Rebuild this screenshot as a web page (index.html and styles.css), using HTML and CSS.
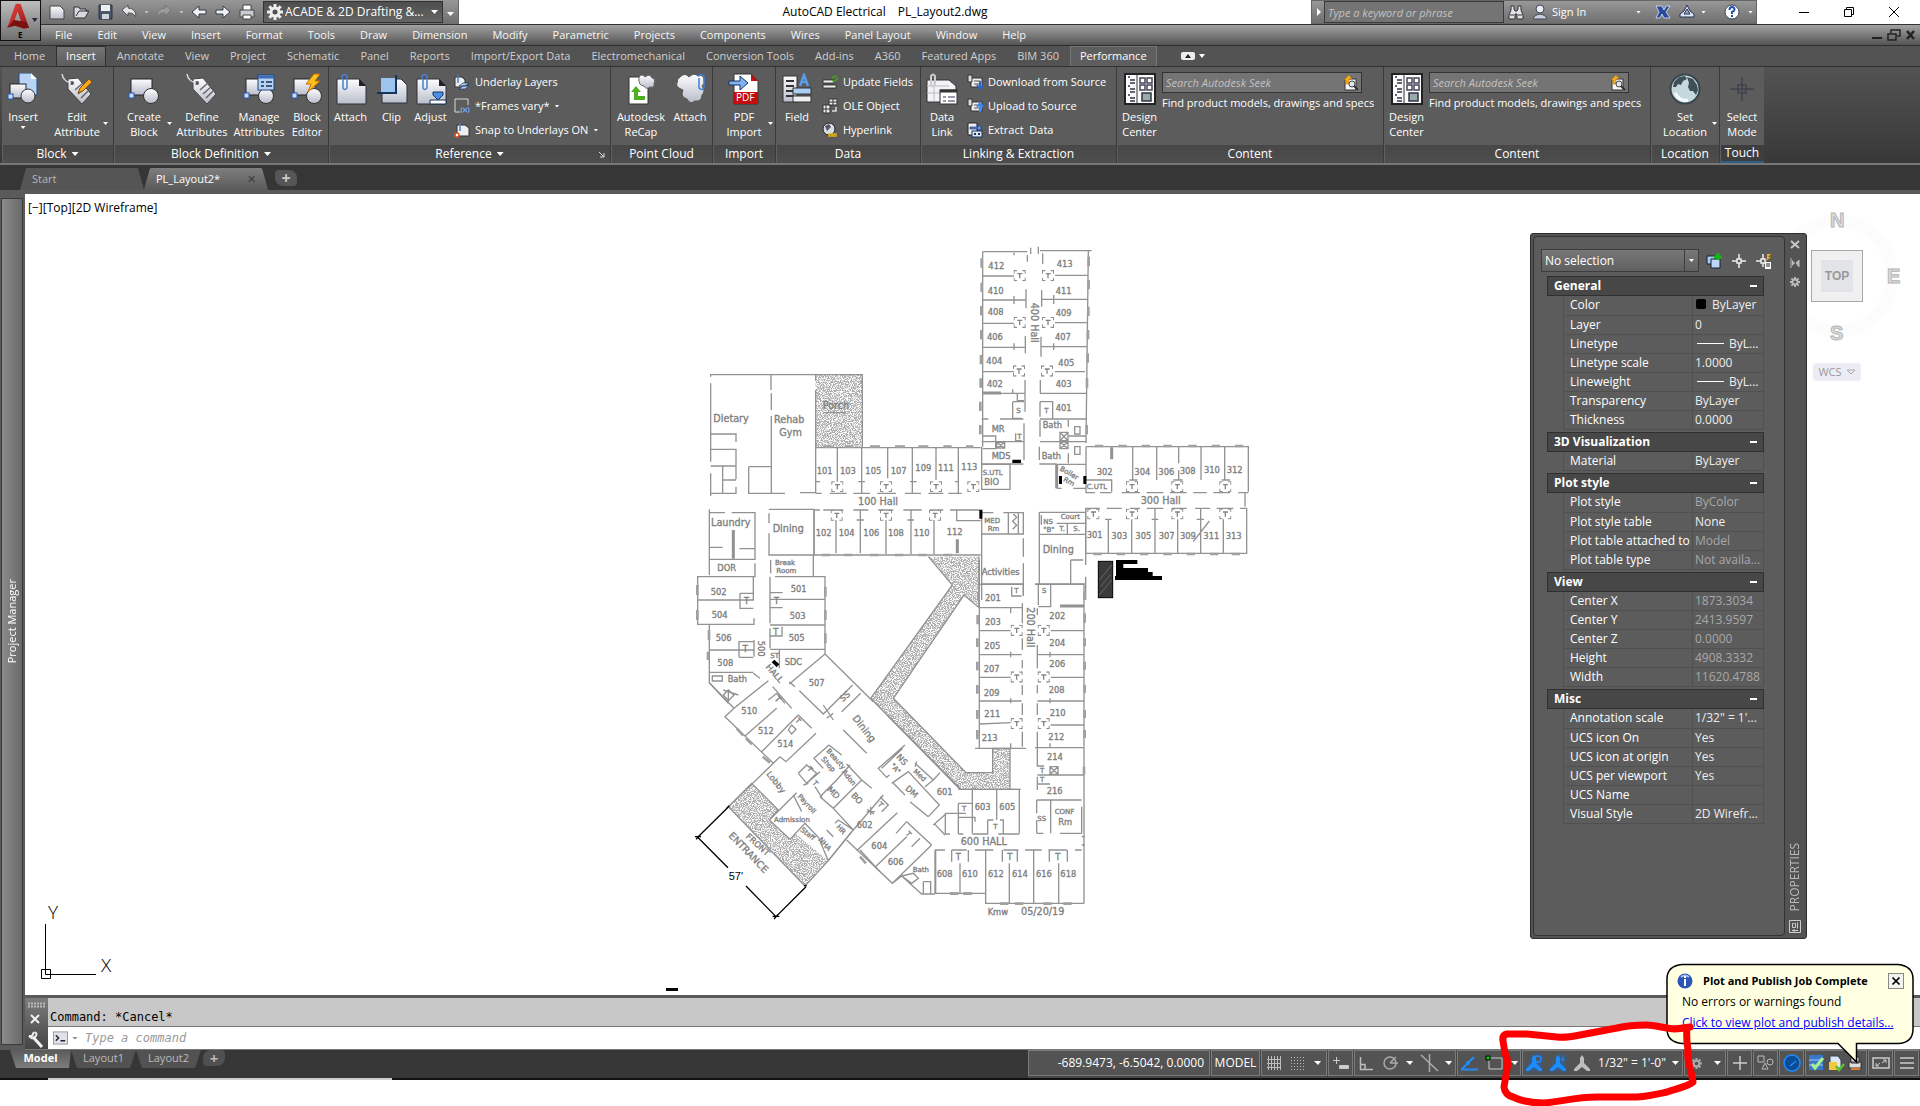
FILE: index.html
```html
<!DOCTYPE html>
<html lang="en">
<head>
<meta charset="utf-8">
<title>AutoCAD Electrical - PL_Layout2.dwg</title>
<link rel="stylesheet" href="styles.css">
</head>
<body>
<svg class="defs" aria-hidden="true">
  <defs>
    <linearGradient id="metal" x1="0" y1="0" x2="0" y2="1"><stop offset="0" stop-color="#fdfdfe"/><stop offset="1" stop-color="#b9bdcb"/></linearGradient>
    <linearGradient id="red" x1="0" y1="0" x2="1" y2="1"><stop offset="0" stop-color="#e8473f"/><stop offset="1" stop-color="#8e1414"/></linearGradient>
    <filter id="speckle" x="0" y="0" width="1" height="1">
      <feTurbulence type="fractalNoise" baseFrequency="0.3" numOctaves="2" seed="7"/>
      <feColorMatrix values="0 0 0 0 .42  0 0 0 0 .42  0 0 0 0 .42  6 0 0 0 -2.4"/>
      <feComposite in2="SourceGraphic" operator="in"/>
    </filter>
    <symbol id="block" viewBox="0 0 32 32"><rect x="3" y="6" width="21" height="16" fill="url(#metal)" stroke="#22252c"/><rect x="1" y="20" width="5" height="5" fill="#c9dcff" stroke="#2456b0"/><circle cx="23" cy="23" r="7.500" fill="url(#metal)" stroke="#333"/></symbol>
    <symbol id="insert" viewBox="0 0 32 32"><path d="M12 0h12l6 6v16H12z" fill="#b7d4f5" stroke="#274a80"/><path d="M24 0v6h6z" fill="#fff"/><rect x="3" y="11" width="16" height="14" fill="url(#metal)" stroke="#22252c"/><rect x="1" y="21" width="5" height="5" fill="#c9dcff" stroke="#2456b0"/><circle cx="21" cy="23" r="7" fill="url(#metal)" stroke="#333"/></symbol>
    <symbol id="tag" viewBox="0 0 32 32"><path d="M7 6l10-1 13 16-9 10L7 16z" fill="url(#metal)" stroke="#444"/><circle cx="11" cy="10" r="2" fill="#555"/><path d="M1 1c1 6 4 8 9 9" fill="none" stroke="#ddd" stroke-width="1.500"/><path d="M14 17l8-7M17 21l8-7M20 25l7-7" stroke="#666" stroke-width="1.500"/></symbol>
    <symbol id="tagedit" viewBox="0 0 32 32"><use href="#tag"/><path d="M17 20l2-5 9-9 3 3-9 9z" fill="#f4a91c" stroke="#8a4a08"/></symbol>
    <symbol id="manage" viewBox="0 0 32 32"><use href="#block"/><rect x="15" y="2" width="16" height="15" fill="#b9d2f2" stroke="#1d437d"/><path d="M15 4h16" stroke="#3b6cb8" stroke-width="3"/><path d="M18 9h3M18 13h3M23 9h6M23 13h6" stroke="#16325e" stroke-width="1.500"/></symbol>
    <symbol id="bolt" viewBox="0 0 32 32"><use href="#block"/><path d="M23 1L15 11h5l-3 8 12-11h-5l5-7z" fill="#ffc21a" stroke="#c76a00"/></symbol>
    <symbol id="sheet" viewBox="0 0 32 32"><path d="M2 6h22l7 7v18H2z" fill="url(#metal)" stroke="#2d3038"/><path d="M24 6v7h7z" fill="#222"/><path d="M7 6V3q2.500-3 5 0v12q-2.500 3-4 0V6" fill="none" stroke="#4a7fd0" stroke-width="1.500"/></symbol>
    <symbol id="clip" viewBox="0 0 32 32"><path d="M6 6h19l6 6v18H6z" fill="url(#metal)" stroke="#2d3038"/><path d="M5 5h14v14H5z" fill="#9cc4ee"/><path d="M1 20h19V2" fill="none" stroke="#16325e" stroke-width="2"/></symbol>
    <symbol id="adjust" viewBox="0 0 32 32"><use href="#sheet"/><path d="M15 27h16v4H15z" fill="#fff" stroke="#16325e"/><path d="M18 19h10v3l-5 5-5-5z" fill="#4a90e8" stroke="#16325e"/></symbol>
    <symbol id="cloud" viewBox="0 0 32 32"><path d="M6 4q5-5 9 0 5-5 9-1 5-2 6 3 2 4-2 7 4 5 0 9 0 7-7 6-5 4-8-2-7-2-4-9-8-3-6-7 0-4 3-6z" fill="url(#metal)" stroke="#555"/></symbol>
    <symbol id="cloudclip" viewBox="0 0 32 32"><use href="#cloud"/><path d="M24 3q3-3 6 0v12q-2 3-5 0V5" fill="none" stroke="#3f7fd8" stroke-width="1.500"/></symbol>
    <symbol id="recap" viewBox="0 0 32 32"><path d="M4 4h19v27H4z" fill="#fff" stroke="#333"/><path d="M14 4q3-4 6 0 5-4 7 1 4 1 2 5 1 5-4 4-4 3-6-1-6 0-5-9z" fill="url(#metal)" stroke="#666"/><path d="M11 13l5 6h-3v4h7v4H9v-8H6z" fill="#4fae22"/></symbol>
    <symbol id="pdf" viewBox="0 0 32 32"><path d="M6 1h17l7 7v23H6z" fill="#fff" stroke="#333"/><path d="M23 1v7h7z" fill="#c01010"/><path d="M6 19h24v12H6z" fill="#c40d0d"/><path d="M1 8h11V3l8 7-8 7v-5H1z" fill="#7fb2f0" stroke="#16325e"/></symbol>
    <symbol id="field" viewBox="0 0 32 32"><rect x="2" y="3" width="14" height="26" fill="url(#metal)" stroke="#333"/><path d="M5 8h8M5 13h8M5 18h8M5 23h8" stroke="#333" stroke-width="2"/><path d="M19 13l4-11 4 11M20 9h6" fill="none" stroke="#5a9be8" stroke-width="2.500"/><rect x="12" y="15" width="18" height="6" fill="#a9cdf5" stroke="#333"/><rect x="12" y="23" width="18" height="6" fill="#eee" stroke="#333"/></symbol>
    <symbol id="datalink" viewBox="0 0 32 32"><path d="M1 7h22l7 6v16H1z" fill="#f2f3f6" stroke="#333"/><path d="M1 13h22M1 20h14M8 8v20" stroke="#bbb"/><rect x="14" y="17" width="17" height="14" fill="#fff" stroke="#333"/><path d="M14 18h17" stroke="#333" stroke-width="3"/><path d="M17 24h3M22 24h7M17 28h3M22 28h7" stroke="#335"/><path d="M5 3q2-3 4 0v9q-2 3-4 0z" fill="none" stroke="#ccc" stroke-width="2"/></symbol>
    <symbol id="design" viewBox="0 0 32 32"><rect x="1" y="1" width="30" height="30" fill="#fbfbfd" stroke="#222" stroke-width="2"/><path d="M13 1v30" stroke="#333"/><path d="M4 4h2M6 7h5M6 10h5M4 13h2M6 16h5M6 19h5M4 22h2M6 25h5M6 28h5" stroke="#334" stroke-width="1.500"/><path d="M16 5h5v5h-5zM23 5h5v5h-5zM16 12h5v5h-5zM23 12h5v5h-5z" fill="#fff" stroke="#445" stroke-width="1.500"/><rect x="18" y="20" width="9" height="8" fill="#9aa" stroke="#334" stroke-width="1.500"/></symbol>
    <symbol id="globe" viewBox="0 0 32 32"><circle cx="16" cy="16" r="14.500" fill="#c5d8de" stroke="#38454b" stroke-width="2"/><path d="M5 9l5-5 6-1 2 3-4 2-2 4-3-1-2 3-3 0zM18 4l6 2 4 6 1 5-2 5-3-4-3 0-2-4 1-4z" fill="#3f4f56"/><path d="M6 20q5 9 13 7" fill="none" stroke="#f5fbfd" stroke-width="3"/></symbol>
    <symbol id="cross" viewBox="0 0 32 32"><path d="M16 4v24M4 16h24M12 12h8v8h-8z" fill="none" stroke="#3e434b" stroke-width="1.500"/></symbol>
    <symbol id="s-layers" viewBox="0 0 16 16"><path d="M1 3h7l3 3v7H1z" fill="#eee" stroke="#333"/><path d="M4 1v8" stroke="#4a7fd0" stroke-width="1.500"/><path d="M5 12l4-3h6l-4 3zM5 15l4-3h6l-4 3z" fill="#b9cdec" stroke="#16325e" stroke-width=".7"/></symbol>
    <symbol id="s-frame" viewBox="0 0 16 16"><path d="M6 14H1V1h13v6" fill="none" stroke="#d8d8d8"/><path d="M8 9q-2 3 0 6M14 9q2 3 0 6M9 10l4 4M13 10l-4 4" fill="none" stroke="#6ea0ea" stroke-width="1.200"/></symbol>
    <symbol id="s-snap" viewBox="0 0 16 16"><path d="M3 3h8l4 3v8H3z" fill="#eee" stroke="#333"/><path d="M6 1v8" stroke="#4a7fd0" stroke-width="1.500"/><circle cx="3" cy="13" r="2" fill="#fff" stroke="#e05522" stroke-width="1.500"/></symbol>
    <symbol id="s-update" viewBox="0 0 16 16"><path d="M1 6h11v3H1zM1 11h13v3H1z" fill="#eee" stroke="#222" stroke-width=".8"/><path d="M10 5a3 3 0 0 1 5-2M15 3a3 3 0 0 1-5 3" fill="none" stroke="#4a9a2a" stroke-width="1.500"/></symbol>
    <symbol id="s-ole" viewBox="0 0 16 16"><path d="M7 1h8v6H7zM7 4h8M11 1v6M1 7h7v8H1zM1 11h7M4 7v8" fill="#eee" stroke="#333"/><path d="M14 9v4h-4" fill="none" stroke="#ddd" stroke-width="1.500"/></symbol>
    <symbol id="s-link" viewBox="0 0 16 16"><circle cx="7" cy="7" r="6" fill="#d5dde0" stroke="#223"/><path d="M3 4l4-2 2 3-4 4z" fill="#556"/><path d="M7 12h3v2H7zM11 12h3v2h-3z" fill="none" stroke="#e0b010" stroke-width="1.500"/></symbol>
    <symbol id="s-down" viewBox="0 0 16 16"><path d="M4 4h11v9H4z" fill="#eee" stroke="#333"/><path d="M1 1h4v7H1z" fill="#ddd" stroke="#333"/><path d="M7 7h6M7 10h5" stroke="#555"/><path d="M13 7v7M10 11l3 4 3-4" fill="none" stroke="#2b66c0" stroke-width="2"/></symbol>
    <symbol id="s-up" viewBox="0 0 16 16"><path d="M4 4h11v9H4z" fill="#eee" stroke="#333"/><path d="M1 1h4v7H1z" fill="#ddd" stroke="#333"/><path d="M7 7h6M7 10h5" stroke="#555"/><path d="M13 14V6M10 9l3-4 3 4" fill="none" stroke="#3c8af0" stroke-width="2"/></symbol>
    <symbol id="s-extract" viewBox="0 0 16 16"><path d="M1 1h9v12H1z" fill="#eee" stroke="#222"/><path d="M3 5h8V2l4 4-4 4V7H3z" fill="#5a8bd8" stroke="#16325e" stroke-width=".7"/><rect x="5" y="9" width="10" height="6" fill="#dfe8f8" stroke="#16325e"/><path d="M7 12h2M11 12h2" stroke="#16325e" stroke-width="2"/></symbol>
    <symbol id="s-seek" viewBox="0 0 16 16"><path d="M2 4h11v11H2z" fill="#f5f5f5" stroke="#333"/><path d="M3 9V5l-2 0 5-5 3 4H6v5z" fill="#f7ae1c" stroke="#b56e00" stroke-width=".5"/><circle cx="9" cy="9" r="3" fill="#dfe6ee" stroke="#444"/><path d="M11 11l4 4" stroke="#333" stroke-width="2"/></symbol>
    <symbol id="gear" viewBox="0 0 16 16"><path d="M8 0v16M0 8h16M2.300 2.300l11.400 11.400M13.700 2.300L2.300 13.700" stroke="currentColor" stroke-width="3"/><circle cx="8" cy="8" r="4" fill="none" stroke="currentColor" stroke-width="3"/><circle cx="8" cy="8" r="2.500" fill="#505050"/></symbol>
    <symbol id="anno" viewBox="0 0 16 16"><path d="M8 0l2 3v5l6 6v2h-3l-5-4-5 4H0v-2l6-6V3z" fill="currentColor"/></symbol>
    <symbol id="anno-vis" viewBox="0 0 16 16"><use href="#anno"/><circle cx="12" cy="4" r="3" fill="#535353" stroke="currentColor" stroke-width="1.500"/></symbol>
    <symbol id="anno-auto" viewBox="0 0 16 16"><use href="#anno"/><path d="M14 0l-4 5h3l-2 4 5-5h-3l2-4z" fill="currentColor" stroke="#535353" stroke-width=".5"/></symbol>
    <symbol id="toilet" viewBox="-18 -16 36 32"><path d="M-17-6v-9h9M8-15h9v9M17 6v9h-9M-8 15h-9V6" fill="none" stroke="#8f8f8f" stroke-width="4"/><path d="M-7-6H8M0-6V8" stroke="#858585" stroke-width="4"/></symbol>
  </defs>
</svg>

<header class="top">
  <div class="titlebar">
    <div class="quick">
      <button class="qb" aria-label="New"><svg viewBox="0 0 16 16"><path d="M1 2h10l4 4v9H1z" fill="url(#metal)" stroke="#444"/></svg></button>
      <button class="qb" aria-label="Open"><svg viewBox="0 0 16 16"><path d="M1 14V3h5l1 2h6v2l3 0-4 7z" fill="#d5d8df" stroke="#333"/><path d="M3 12l3-5h9" fill="none" stroke="#333"/></svg></button>
      <button class="qb" aria-label="Save"><svg viewBox="0 0 16 16"><path d="M2 1h13v14H2z" fill="#4b5769" stroke="#2b333f"/><path d="M4 1h9v6H4z" fill="#eee"/><path d="M5 10h7v5H5z" fill="#cdd3dc"/></svg></button>
      <button class="qb" aria-label="Undo"><svg viewBox="0 0 16 16"><path d="M1 6l6-5v3q8 0 8 9-3-5-8-4v3z" fill="#e4e4e8" stroke="#555"/></svg></button>
      <i class="arrow dim"></i>
      <button class="qb" aria-label="Redo"><svg viewBox="0 0 16 16"><path d="M15 6L9 1v3q-8 0-8 9 3-5 8-4v3z" fill="#9a9a9a" stroke="#777"/></svg></button>
      <i class="arrow dim"></i>
      <button class="qb" aria-label="Previous"><svg viewBox="0 0 16 16"><path d="M1 8l7-6v4h7v4H8v4z" fill="#f0f1f4" stroke="#333c4e"/></svg></button>
      <button class="qb" aria-label="Next"><svg viewBox="0 0 16 16"><path d="M15 8L8 2v4H1v4h7v4z" fill="#f0f1f4" stroke="#333c4e"/></svg></button>
      <button class="qb" aria-label="Print"><svg viewBox="0 0 16 16"><path d="M4 1h8v6H4z" fill="#fff" stroke="#444"/><path d="M1 6h14v7H1z" fill="#c9ccd2" stroke="#444"/><path d="M4 11h8v4H4z" fill="#fff" stroke="#444"/></svg></button>
      <div class="workspace-pick">
        <svg class="i16"><use href="#gear"/></svg>
        <select aria-label="Workspace"><option>ACADE &amp; 2D Drafting &amp;...</option></select>
        <i class="arrow big"></i>
      </div>
      <button class="more" aria-label="Customize"><i class="arrow big"></i></button>
    </div>
    <h1><span>AutoCAD Electrical</span><span>PL_Layout2.dwg</span></h1>
    <div class="info">
      <i class="arrow right"></i>
      <input type="text" aria-label="Search help" placeholder="Type a keyword or phrase">
      <button class="qb" aria-label="Search"><svg viewBox="0 0 16 16"><path d="M3 2h3v3l1 2h2l1-2V2h3v4l2 5v4H9v-5H7v5H1v-4l2-5z" fill="#e2e2e8" stroke="#333"/><path d="M2 11h4M10 11h4" stroke="#333"/></svg></button>
      <button class="sign"><svg class="i16" viewBox="0 0 16 16"><circle cx="8" cy="5" r="4" fill="#e9edf5" stroke="#445"/><path d="M1 15q1-4 7-5 6 1 7 5z" fill="#c8cede" stroke="#445"/></svg>Sign In<i class="arrow"></i></button>
      <button class="qb" aria-label="Exchange"><svg viewBox="0 0 16 16"><path d="M1 2h6l2 4 2-4h4l-4 6 4 6H9L7 10l-2 4H1l3-6z" fill="#274a9c" stroke="#dfe6f7" stroke-width=".8"/></svg></button>
      <button class="qb app" aria-label="App store"><svg viewBox="0 0 16 16"><path d="M8 1l3 6 4 3v3H1v-3l4-3z" fill="#dfe6f7" stroke="#23304e"/><path d="M8 5l3 5H5z" fill="#9aa6c4" stroke="#23304e"/></svg></button>
      <i class="arrow"></i>
      <button class="qb help" aria-label="Help"><svg viewBox="0 0 16 16"><circle cx="8" cy="8" r="7" fill="#fff" stroke="#345"/><path d="M5.500 6q0-3 2.500-3t2.500 2.500Q10.500 7 8 8v2M8 11v2" fill="none" stroke="#2050b0" stroke-width="2"/></svg></button>
      <i class="arrow"></i>
    </div>
    <div class="winctl">
      <button aria-label="Minimize"><svg viewBox="0 0 12 12"><path d="M1 6.500h10" stroke="#000"/></svg></button>
      <button aria-label="Restore"><svg viewBox="0 0 12 12"><path d="M1.500 3.500h7v7h-7zM3.500 3V1.500h7v7H9" fill="none" stroke="#000"/></svg></button>
      <button aria-label="Close"><svg viewBox="0 0 12 12"><path d="M1 1l10 10M11 1L1 11" stroke="#000"/></svg></button>
    </div>
  </div>
  <nav class="menubar">
    <a href="#">File</a><a href="#">Edit</a><a href="#">View</a><a href="#">Insert</a><a href="#">Format</a><a href="#">Tools</a><a href="#">Draw</a><a href="#">Dimension</a><a href="#">Modify</a><a href="#">Parametric</a><a href="#">Projects</a><a href="#">Components</a><a href="#">Wires</a><a href="#">Panel Layout</a><a href="#">Window</a><a href="#">Help</a>
    <div class="docctl">
      <svg viewBox="0 0 44 12"><path d="M0 9h10" stroke="#222" stroke-width="2"/><path d="M16 5h8v6h-8zM19 4V1h9v6h-3" fill="none" stroke="#222" stroke-width="1.500"/><path d="M35 2l7 8M42 2l-7 8" stroke="#222" stroke-width="2.500"/></svg>
    </div>
  </nav>
  <button class="appbtn" aria-label="Application menu"><svg viewBox="0 0 40 41"><path d="M6 28L15 3h5l9 25-6 1-6-18-5 14z" fill="url(#red)"/><path d="M6 28l7-8 13 2 3 6-6 1-9-3z" fill="#7b1010"/><path d="M32 18h6l-3 4z" fill="#222c3c"/></svg><b>E</b></button>
  <nav class="rtabs">
    <a href="#">Home</a><a href="#" class="on">Insert</a><a href="#">Annotate</a><a href="#">View</a><a href="#">Project</a><a href="#">Schematic</a><a href="#">Panel</a><a href="#">Reports</a><a href="#">Import/Export Data</a><a href="#">Electromechanical</a><a href="#">Conversion Tools</a><a href="#">Add-ins</a><a href="#">A360</a><a href="#">Featured Apps</a><a href="#">BIM 360</a><a href="#" class="hl">Performance</a>
    <button class="mini" aria-label="Minimize ribbon"><svg viewBox="0 0 24 8"><rect width="14" height="8" rx="2" fill="#eee"/><path d="M4 6h6L7 2z" fill="#222"/><path d="M18 2h6l-3 4z" fill="#fff"/></svg></button>
  </nav>
  <div class="ribbon">
    <section class="panel p-block">
      <div class="tools">
        <button class="tool"><svg><use href="#insert"/></svg><span>Insert</span><i class="arrow under"></i></button>
        <button class="tool"><svg><use href="#tagedit"/></svg><span>Edit<br>Attribute</span><i class="arrow side"></i></button>
      </div>
      <h2>Block <i class="arrow big"></i></h2>
    </section>
    <section class="panel p-def">
      <div class="tools">
        <button class="tool"><svg><use href="#block"/></svg><span>Create<br>Block</span><i class="arrow side"></i></button>
        <button class="tool"><svg><use href="#tag"/></svg><span>Define<br>Attributes</span></button>
        <button class="tool"><svg><use href="#manage"/></svg><span>Manage<br>Attributes</span></button>
        <button class="tool"><svg><use href="#bolt"/></svg><span>Block<br>Editor</span></button>
      </div>
      <h2>Block Definition <i class="arrow big"></i></h2>
    </section>
    <section class="panel p-ref">
      <div class="tools">
        <button class="tool"><svg><use href="#sheet"/></svg><span>Attach</span></button>
        <button class="tool"><svg><use href="#clip"/></svg><span>Clip</span></button>
        <button class="tool"><svg><use href="#adjust"/></svg><span>Adjust</span></button>
        <div class="smalls">
          <button><svg><use href="#s-layers"/></svg>Underlay Layers</button>
          <button><svg><use href="#s-frame"/></svg>*Frames vary* <i class="arrow"></i></button>
          <button><svg><use href="#s-snap"/></svg>Snap to Underlays ON <i class="arrow"></i></button>
        </div>
      </div>
      <h2>Reference <i class="arrow big"></i><svg class="launch" viewBox="0 0 6 6"><path d="M0 0l5 5M5 1v4H1" fill="none" stroke="#ddd"/></svg></h2>
    </section>
    <section class="panel p-cloud">
      <div class="tools">
        <button class="tool"><svg><use href="#recap"/></svg><span>Autodesk<br>ReCap</span></button>
        <button class="tool"><svg><use href="#cloudclip"/></svg><span>Attach</span></button>
      </div>
      <h2>Point Cloud</h2>
    </section>
    <section class="panel p-import">
      <div class="tools">
        <button class="tool pdf"><svg><use href="#pdf"/></svg><em>PDF</em><span>PDF<br>Import</span><i class="arrow side"></i></button>
      </div>
      <h2>Import</h2>
    </section>
    <section class="panel p-data">
      <div class="tools">
        <button class="tool"><svg><use href="#field"/></svg><span>Field</span></button>
        <div class="smalls">
          <button><svg><use href="#s-update"/></svg>Update Fields</button>
          <button><svg><use href="#s-ole"/></svg>OLE Object</button>
          <button><svg><use href="#s-link"/></svg>Hyperlink</button>
        </div>
      </div>
      <h2>Data</h2>
    </section>
    <section class="panel p-linking">
      <div class="tools">
        <button class="tool"><svg><use href="#datalink"/></svg><span>Data<br>Link</span></button>
        <div class="smalls">
          <button><svg><use href="#s-down"/></svg>Download from Source</button>
          <button><svg><use href="#s-up"/></svg>Upload to Source</button>
          <button><svg><use href="#s-extract"/></svg>Extract&nbsp; Data</button>
        </div>
      </div>
      <h2>Linking &amp; Extraction</h2>
    </section>
    <section class="panel p-content">
      <div class="tools">
        <button class="tool"><svg><use href="#design"/></svg><span>Design<br>Center</span></button>
        <div class="seek"><label><input type="text" placeholder="Search Autodesk Seek"><svg><use href="#s-seek"/></svg></label><p>Find product models, drawings and specs</p></div>
      </div>
      <h2>Content</h2>
    </section>
    <section class="panel p-content">
      <div class="tools">
        <button class="tool"><svg><use href="#design"/></svg><span>Design<br>Center</span></button>
        <div class="seek"><label><input type="text" placeholder="Search Autodesk Seek"><svg><use href="#s-seek"/></svg></label><p>Find product models, drawings and specs</p></div>
      </div>
      <h2>Content</h2>
    </section>
    <section class="panel p-loc">
      <div class="tools">
        <button class="tool"><svg><use href="#globe"/></svg><span>Set<br>Location</span><i class="arrow side"></i></button>
      </div>
      <h2>Location</h2>
    </section>
    <section class="panel p-touch">
      <div class="tools">
        <button class="tool"><svg><use href="#cross"/></svg><span>Select<br>Mode</span></button>
      </div>
      <h2>Touch</h2>
    </section>
  </div>
</header>

<nav class="filetabs">
  <a href="#" class="ftab">Start</a>
  <a href="#" class="ftab on">PL_Layout2*<span>✕</span></a>
  <button class="plus" aria-label="New drawing">+</button>
</nav>

<div class="work">
  <aside class="pm"><div><span>Project Manager</span></div></aside>
  <div class="center">
    <main class="canvas">
      <svg class="drawing" viewBox="25 194 1895 801">
        <svg x="660" y="340" width="330" height="360" viewBox="0 0 990 1080" overflow="visible" class="plan">
          <g filter="url(#speckle)" stroke="none" fill="#888">
            <path d="M467 104H607V322H467z"/>
            <path d="M805 650H957V800L912 765L700 1075L918 1298H998V1225H1050V1348H900L632 1075L877 735z"/>
            <path d="M205 1400L275 1330L355 1410L328 1440L390 1498L405 1480L505 1562L435 1638z"/>
          </g>
          <!-- west wing -->
          <path d="M152 110V104H607V322M152 130V365M152 400V468M152 282H228V306M152 328H228V375M152 378H228V418M188 378V458M188 420H228M152 460H228V440M333 104V150M334 160V210M334 228V458M266 380H333M266 380V460H375M420 458H467V150M467 104V122M490 218H555"/>
          <path d="M467 323H962M532 323V425M605 323V460M683 323V415M757 323V460M828 323V420M895 323V460M467 425H480M595 425H615M750 425H770M885 425H895M467 460H485M510 460H560M580 460H630M652 460H708M735 460H783M805 460H850M865 460H905"/>
          <path d="M465 510H480M490 510H550M580 510H625M655 510H700M730 510H785M810 510H850M870 510H962M462 508V642M528 540V640M601 510V640M678 540V642M753 510V642M822 540V642M890 510V542H962M590 540H612M742 540H762M460 645H962"/>
          <path class="thick" d="M892 598V640M220 570V656"/>
          <path d="M148 508V705M148 518H195M215 518H285V625M148 622H188M238 626H285V658H148M285 670V710H113V853H282V835M113 780H280V708M327 508H462V645H327V580M327 550V520M332 660V700M460 645V710M345 710H495V942M380 710H345M330 778H495M330 855H495M330 710V850M330 865V925M330 928H495M148 853V1028L205 1090M148 930H280M148 997H280M282 900V950M358 930V985M240 760H280M240 760V805H280M330 758H368M330 803H368M330 888H366V860M237 950V905H280M237 952H280M157 1008H187V1023H157z"/>
          <g class="win"><path d="M490 320h25M555 320h25M630 320h30M705 320h30M775 320h30M850 320h25M918 320h22M485 645h25M552 645h25M630 645h25M705 645h25M775 645h25M850 645h25M112 735v30M112 810v30M496 740v30M496 810v30M496 880v30M147 870v30M144 935v25"/></g>
          <g class="t"><use href="#toilet" x="514" y="424" width="36" height="32"/><use href="#toilet" x="660" y="424" width="36" height="32"/><use href="#toilet" x="810" y="424" width="36" height="32"/><use href="#toilet" x="922" y="424" width="36" height="32"/><use href="#toilet" x="512" y="510" width="36" height="32"/><use href="#toilet" x="660" y="510" width="36" height="32"/><use href="#toilet" x="807" y="510" width="36" height="32"/></g>
          <g class="lbl">
            <text x="160" y="247" class="lg">Dietary</text><text x="342" y="250" class="lg">Rehab</text><text x="358" y="287" class="lg">Gym</text><text x="488" y="206" class="lg">Porch</text>
            <text x="470" y="401">101</text><text x="540" y="402">103</text><text x="616" y="402">105</text><text x="692" y="402">107</text><text x="766" y="394">109</text><text x="834" y="394">111</text><text x="904" y="391">113</text>
            <text x="594" y="495" class="lg">100 Hall</text>
            <text x="467" y="588">102</text><text x="536" y="588">104</text><text x="610" y="588">106</text><text x="684" y="588">108</text><text x="761" y="588">110</text><text x="860" y="584">112</text>
            <text x="153" y="559" class="lg">Laundry</text><text x="338" y="576" class="lg">Dining</text><text x="172" y="694">DOR</text><text x="345" y="676" class="sm">Break</text><text x="349" y="698" class="sm">Room</text>
            <text x="152" y="764">502</text><text x="392" y="757">501</text><text x="155" y="834">504</text><text x="389" y="836">503</text><text x="167" y="902">506</text><text x="386" y="904">505</text><text x="172" y="977">508</text><text x="374" y="974">SDC</text><text x="203" y="1026">Bath</text><text x="446" y="1038">507</text>
            <text x="252" y="793">T</text><text x="342" y="791">T</text><text x="340" y="884">T</text><text x="248" y="937">T</text><text x="331" y="955" class="sm">ST</text>
            <text transform="translate(294 902) rotate(90)">500</text><text transform="translate(316 982) rotate(48)">HALL</text>
          </g>
          <!-- corridor edges -->
          <path d="M805 650L877 735L632 1075L900 1348H1080M957 650V803L912 765L700 1075L918 1298H998V1225H1050V1348"/>

          <!-- north and east wings -->
          <g transform="translate(840 -330)">
            <path d="M128 65H262M272 53V72M295 50V72M300 62H455M262 75V95M308 70V102M128 65V650M445 62L438 640M222 68V76M128 138H222M128 210H258M128 280H222M128 352H258M128 425H222M128 490H255M125 567H145M180 567H250M125 635H252M125 702H250M345 136H443M305 208H443M345 278H443M305 350H443M345 425H435M300 490H440M300 567H440M300 635H440M298 702H350M258 178V235M256 318V370M255 450V545M252 580V690M305 180V230M303 320V380M301 450V490M300 515V560M300 570V620M298 650V690M222 198V222M341 195V222M222 340V360M341 340V360M218 478V490M218 515H252M218 515V565H245M232 490V512H252M300 515H338V565M385 570V590M385 618H437M385 670V700M404 590H420V612H404zM404 650H420V673H404zM128 618H167V656H128M227 610V632H245"/>
            <path class="thick" d="M128 489H183M350 703V775M515 652V688"/>
            <path d="M125 650V703M125 703H210V778H125V703M350 703H437M350 775H365M400 775H437M438 650V790M438 650H925V785M578 650V750M650 650V750M716 650V700M716 720V750M783 650V750M854 650V750M440 750H515V785M440 788H465M480 788H515M545 788H600M620 788H670M690 788H740M760 788H800M820 788H870M895 788H925M568 750H592M700 750H728M845 750H870M915 790V830"/>
            <path d="M437 835H480M500 835H545M570 835H600M620 835H670M695 835H740M765 835H810M830 835H880M900 835H920V970H437V835M505 868V970M575 868V970M645 835V970M713 868V970M782 835V970M850 868V970M495 868H515M635 868H655M770 868H792M808 873L760 935"/>
            <path d="M125 838V1110M125 848H160M190 848H250V912H125M205 850V912M235 850V912M220 852l10 10-12 12 12 12-12 12M250 925V980M250 1000V1062M125 1062H250V1095M298 847H437M298 847V1060M298 913H437M382 880V913M350 880H437M304 855V885M437 835V1005M437 1040V1110M392 990V1060M392 990H430M285 1062H437M360 607H384V632H360zM360 607L384 632M384 607L360 632M360 636H384V656H360zM360 636L384 656M384 636L360 656M170 637H194V654H170zM170 637L194 654M194 637L170 654"/>
            <g class="win"><path d="M125 85v28M125 158v28M124 228v28M124 300v28M123 375v28M122 445v28M121 515v28M121 585v28M446 80v28M446 150v28M445 230v28M444 300v28M443 370v28M441 445v28M440 585v28M465 648h25M535 648h25M605 648h25M670 648h25M745 648h25M815 648h25M885 648h25M460 972h25M530 972h25M600 972h25M670 972h25M740 972h25M810 972h25M875 972h25"/></g>
            <g class="t"><use href="#toilet" x="221" y="120" width="36" height="34"/><use href="#toilet" x="221" y="260" width="36" height="34"/><use href="#toilet" x="219" y="406" width="36" height="34"/><use href="#toilet" x="306" y="120" width="36" height="34"/><use href="#toilet" x="306" y="260" width="36" height="34"/><use href="#toilet" x="303" y="406" width="36" height="34"/><use href="#toilet" x="558" y="754" width="36" height="32"/><use href="#toilet" x="694" y="754" width="36" height="32"/><use href="#toilet" x="838" y="754" width="36" height="32"/><use href="#toilet" x="442" y="836" width="36" height="32"/><use href="#toilet" x="558" y="836" width="36" height="32"/><use href="#toilet" x="694" y="836" width="36" height="32"/><use href="#toilet" x="838" y="836" width="36" height="32"/></g>
            <g class="lbl">
              <text x="145" y="116">412</text><text x="143" y="191">410</text><text x="143" y="256">408</text><text x="141" y="331">406</text><text x="139" y="402">404</text><text x="141" y="472">402</text>
              <text x="350" y="110">413</text><text x="347" y="191">411</text><text x="347" y="258">409</text><text x="345" y="331">407</text><text x="355" y="407">405</text><text x="347" y="472">403</text><text x="347" y="543">401</text>
              <text x="229" y="550" class="sm">S</text><text x="313" y="550" class="sm">T</text><text x="232" y="626" class="sm">T</text>
              <text x="155" y="606">MR</text><text x="155" y="686">MDS</text><text x="308" y="595">Bath</text><text x="305" y="686">Bath</text><text x="128" y="734" class="sm">S.UTL</text><text x="133" y="766">BIO</text>
              <text transform="translate(272 218) rotate(90)" class="lg">400 Hall</text><text transform="translate(358 720) rotate(30)" class="sm">Boiler</text><text transform="translate(368 752) rotate(30)" class="sm">Rm</text>
              <text x="470" y="736">302</text><text x="583" y="734">304</text><text x="655" y="734">306</text><text x="719" y="732">308</text><text x="792" y="729">310</text><text x="860" y="729">312</text><text x="440" y="778" class="sm">C.UTL</text>
              <text x="602" y="821" class="lg">300 Hall</text>
              <text x="440" y="924">301</text><text x="514" y="926">303</text><text x="586" y="926">305</text><text x="656" y="926">307</text><text x="720" y="926">309</text><text x="790" y="926">311</text><text x="857" y="926">313</text>
              <text x="133" y="880" class="sm">MED</text><text x="143" y="903" class="sm">Rm</text><text x="310" y="882" class="sm">NS</text><text x="362" y="866" class="sm">Court</text><text x="310" y="906" class="sm">"B"</text><text x="358" y="902" class="sm">T.</text><text x="400" y="902" class="sm">S.</text>
              <text x="308" y="970" class="lg">Dining</text><text x="125" y="1036">Activities</text>
            </g>
            <path class="black" d="M217 689h26v10h-26zM357 738h9v24h-9zM430 738h9v24h-9zM118 840h9v26h-9zM528 990h64v12h-42v12h74v12h14v12h28v12H525v-12h3z"/>
            <rect x="475" y="994" width="43" height="109" fill="#3a3a3a" stroke="#000" stroke-width="3"/>
            <path d="M478 1050L515 1005M478 1095L515 1050M482 1070L510 1035" class="hatch"/>
          </g>

          <!-- south wing -->
          <g transform="translate(780 660)">
            <path d="M178 0V565M178 73H310V108M275 80V108H305M178 143H305M178 212H272M178 284H305M178 352H272M178 423H305M178 492L272 488M165 565H318M355 73V135M355 140H392V75M345 73H492M392 212H492M352 284H492M392 352H492M352 423H492M392 495H492M345 563H492V1030M492 75V560M352 645H492M350 720H485M350 720V760M350 780V820M350 820H370M420 820H485M392 720V820M485 740V820M307 130V190M307 235V270M307 300V325M307 375V405M307 430V465M307 515V560M352 145V165M352 255V325M352 375V400M352 430V465M352 515V620M352 650V690M272 145V160M272 275V292M272 415V430M272 550V565M390 275V292M390 415V430M390 550V565M352 618H372M352 672H390M390 620H414V643H390zM390 620L414 643M414 620L390 643"/>
            <path class="thick" d="M420 138H492"/>
            <path d="M115 688H302M298 690V820M157 690V820M230 690V780M157 822H205M235 822H298M115 822H130M115 730V822M115 730H155M76 760H138M76 760V822H90M115 772H165V785M203 780V820M203 780H220M240 780H250V820M45 870H75M95 870H140M165 870H220M250 870H295M315 870H365M385 870H440M465 870H485M45 870V1000H195M120 910V1000M197 870V1030H492M268 910V1030M341 868V1030M416 910V1030M95 870V905M145 870V905M247 870V905M292 870V905M388 870V905M442 870V905M485 830h10M485 855h10"/>
            <g class="win"><path d="M175 95v26M173 165v28M172 235v26M172 305v26M172 375v26M172 450v26M172 510v28M494 95v24M494 160v28M494 235v24M494 305v24M494 375v24M494 450v24M494 510v24M492 620v24M90 1001h25M130 1001h25M240 1031h25M285 1031h25M370 1031h25M430 1031h25"/></g>
            <g class="t"><use href="#toilet" x="272" y="194" width="36" height="34"/><use href="#toilet" x="272" y="334" width="36" height="34"/><use href="#toilet" x="272" y="474" width="36" height="34"/><use href="#toilet" x="353" y="194" width="36" height="34"/><use href="#toilet" x="353" y="334" width="36" height="34"/><use href="#toilet" x="353" y="474" width="36" height="34"/></g>
            <g class="lbl">
              <text x="195" y="123">201</text><text x="195" y="195">203</text><text x="193" y="268">205</text><text x="191" y="335">207</text><text x="191" y="407">209</text><text x="193" y="472">211</text><text x="185" y="542">213</text>
              <text x="388" y="176">202</text><text x="388" y="258">204</text><text x="388" y="322">206</text><text x="386" y="398">208</text><text x="389" y="467">210</text><text x="385" y="540">212</text><text x="381" y="600">214</text><text x="380" y="703">216</text>
              <text x="283" y="99" class="sm">T</text><text x="366" y="98" class="sm">S</text><text x="360" y="638" class="sm">T</text><text x="360" y="666" class="sm">T</text><text x="126" y="752" class="sm">T</text><text x="220" y="806" class="sm">T</text><text x="107" y="899">T</text><text x="262" y="899">T</text><text x="406" y="899">T</text>
              <text transform="translate(321 142) rotate(90)" class="lg">200 Hall</text>
              <text x="404" y="762" class="sm">CONF</text><text x="415" y="796">Rm</text><text x="352" y="784" class="sm">SS</text>
              <text x="50" y="705">601</text><text x="164" y="749">603</text><text x="238" y="749">605</text><text x="122" y="855" class="lg">600 HALL</text>
              <text x="50" y="950">608</text><text x="126" y="950">610</text><text x="204" y="950">612</text><text x="276" y="950">614</text><text x="348" y="950">616</text><text x="421" y="950">618</text>
              <text x="203" y="1065">Kmw</text><text x="303" y="1065" class="lg">05/20/19</text>
            </g>
          </g>

          <!-- diagonal wing -->
          <g transform="translate(0 900)">
            <path d="M148 128L222 205L195 230L340 370L205 500L435 738L505 662L575 575M222 205L325 122M255 288L350 205M305 335L415 225M360 350L378 365L468 280M340 370L360 350M325 180L350 160L375 190M415 225L455 265M280 100L300 115M338 140L395 205M495 42L388 132M388 125L405 140M495 42L640 185M418 152L490 222L578 135M490 195L520 240M545 215L602 160M500 235L520 220M550 270L620 340M682 225L900 445M205 500L275 430L355 510L328 540L390 598L435 550L475 592L505 662M328 540L410 458M400 465L425 515M430 435L445 430"/>
            <path d="M507 315L462 355L490 385M507 315L545 345M415 400L440 375L470 400L440 430L415 400M440 430L480 395M480 470L530 420L570 375M480 470L520 505L605 420L560 372M520 505L580 570L670 465M605 420L635 445M465 440L490 480M500 570L520 590M525 550L535 540L580 570L505 662M560 600L697 730L725 708L785 762H825M590 632L712 518M645 682L740 590M697 730L815 615M740 545L708 580M740 545L815 615M755 620L780 595M735 315L655 385L680 412L688 405M728 325L665 385M695 430L745 395L838 495L805 530M750 485L805 530M700 430L735 465M765 370L820 420L795 440M820 420L840 398M770 365L765 380M820 555L860 520M825 553L855 585M827 630V762M660 470L685 495L665 515M790 725H812V760M790 725V760M725 708L760 700L775 715L755 730z"/>
            <path d="M190 150L235 165M205 150V185M190 165L205 150L222 165L205 182zM620 515h25M632 500v25M622 508l20 14M385 270L395 255L408 268L395 282zM600 630L660 695"/>
            <g class="win"><path d="M230 265l20 22M258 295l18 18M308 350l22 18M600 650l18 20M870 761h25M910 761h25"/></g>
            <g class="lbl">
              <text x="244" y="222">510</text><text x="294" y="281">512</text><text x="352" y="320">514</text><text x="590" y="564">602</text><text x="634" y="626">604</text><text x="683" y="676">606</text><text x="758" y="696" class="sm">Bath</text>
              <text transform="translate(548 186) rotate(-40)">SS</text><text transform="translate(342 178) rotate(48)">T</text><text transform="translate(404 242) rotate(48)" class="sm">T</text>
              <text transform="translate(576 235) rotate(52)" class="lg">Dining</text><text transform="translate(318 402) rotate(52)">Lobby</text><text transform="translate(498 334) rotate(48)" class="sm">Beauty</text><text transform="translate(482 358) rotate(48)" class="sm">Shop</text><text transform="translate(545 396) rotate(52)" class="sm">Adon</text><text transform="translate(440 388) rotate(48)" class="sm">T</text><text transform="translate(456 430) rotate(48)" class="sm">T</text><text transform="translate(500 450) rotate(45)">MD</text><text transform="translate(572 467) rotate(48)">BO</text><text transform="translate(652 494) rotate(48)" class="sm">T</text><text transform="translate(412 470) rotate(48)" class="sm">Payroll</text><text x="342" y="546" class="sm">Admission</text><text transform="translate(420 572) rotate(38)" class="sm">Staff</text><text transform="translate(474 600) rotate(48)" class="sm">NHA</text><text transform="translate(528 562) rotate(48)" class="sm">HR</text><text transform="translate(736 582) rotate(48)" class="sm">T</text><text transform="translate(708 352) rotate(48)">NS</text><text transform="translate(690 378) rotate(48)" class="sm">"A"</text><text transform="translate(758 396) rotate(42)" class="sm">Med</text><text transform="translate(734 448) rotate(42)">DM</text>
              <text transform="translate(256 592) rotate(42)">FRONT</text><text transform="translate(204 588) rotate(46)" class="lg">ENTRANCE</text>
            </g>
            <path class="black" d="M335 67l8-8 15 14-8 9z"/>
            <path class="dim" d="M205 501L113 592L204 683M258 738L348 830L438 740M105 590h18M108 598l12-12M338 829h20M342 837l12-14M200 505l8-8M432 737h8"/>
            <text x="206" y="721" class="dimtext">57'</text>
          </g>
        </svg>
        <path d="M666 988h12v3h-12z" fill="#000"/>
        <g fill="none" stroke="#000"><path d="M45.500 924v50.500H96M41.500 969.500h9v9h-9z"/></g>
        <text x="48" y="919" class="axis">Y</text><text x="101" y="972" class="axis">X</text>
      </svg>
      <p class="viewlabel">[−][Top][2D Wireframe]</p>
      <div class="cube">
        <svg viewBox="0 0 140 140"><circle cx="61" cy="69" r="55" fill="none" stroke="#fcfcfc" stroke-width="12"/></svg>
        <b class="n">N</b><b class="e">E</b><b class="s">S</b>
        <button class="face"><span>TOP</span></button>
        <button class="wcs">WCS <svg viewBox="0 0 10 6"><path d="M1 1h8L5 5z" fill="none" stroke="#aaa"/></svg></button>
      </div>
      <section class="palette">
        <div class="body">
          <div class="pick">
            <label><select aria-label="Selection"><option>No selection</option></select><span><i class="arrow"></i></span></label>
            <button aria-label="Toggle pickadd"><svg viewBox="0 0 16 16"><path d="M1 3h8v8H1z" fill="#a8c8f0" stroke="#123"/><path d="M5 6h9v9H5z" fill="#bcd6f6" stroke="#123"/><path d="M12 0v7M8 4h8" stroke="#16b516" stroke-width="3"/></svg></button>
            <button aria-label="Select objects"><svg viewBox="0 0 16 16"><path d="M8 1v5M8 10v5M1 8h5M10 8h5M6 6h4v4H6z" fill="none" stroke="#eee" stroke-width="1.500"/></svg></button>
            <button aria-label="Quick select"><svg viewBox="0 0 16 16"><path d="M7 1v5M7 10v4M0 8h5M5 6h4v4H5z" fill="none" stroke="#eee" stroke-width="1.500"/><path d="M11 1h4l-3 3h3l-5 4 1-3z" fill="#ffa51a"/><path d="M9 9h6v7H9z" fill="#fff"/><path d="M10 11h4M10 13h4" stroke="#222"/></svg></button>
          </div>
          <section class="grp"><button>General<i></i></button><table>
            <tr><th>Color</th><td><i class="swatch"></i>ByLayer</td></tr><tr><th>Layer</th><td>0</td></tr><tr><th>Linetype</th><td><i class="line"></i>ByL...</td></tr><tr><th>Linetype scale</th><td>1.0000</td></tr><tr><th>Lineweight</th><td><i class="line"></i>ByL...</td></tr><tr><th>Transparency</th><td>ByLayer</td></tr><tr><th>Thickness</th><td>0.0000</td></tr></table></section>
          <section class="grp"><button>3D Visualization<i></i></button><table><tr><th>Material</th><td>ByLayer</td></tr></table></section>
          <section class="grp"><button>Plot style<i></i></button><table>
            <tr><th>Plot style</th><td class="off">ByColor</td></tr><tr><th>Plot style table</th><td>None</td></tr><tr><th>Plot table attached to</th><td class="off">Model</td></tr><tr><th>Plot table type</th><td class="off">Not availa...</td></tr></table></section>
          <section class="grp"><button>View<i></i></button><table>
            <tr><th>Center X</th><td class="off">1873.3034</td></tr><tr><th>Center Y</th><td class="off">2413.9597</td></tr><tr><th>Center Z</th><td class="off">0.0000</td></tr><tr><th>Height</th><td class="off">4908.3332</td></tr><tr><th>Width</th><td class="off">11620.4788</td></tr></table></section>
          <section class="grp"><button>Misc<i></i></button><table>
            <tr><th>Annotation scale</th><td>1/32" = 1'...</td></tr><tr><th>UCS icon On</th><td>Yes</td></tr><tr><th>UCS icon at origin</th><td>Yes</td></tr><tr><th>UCS per viewport</th><td>Yes</td></tr><tr><th>UCS Name</th><td></td></tr><tr><th>Visual Style</th><td>2D Wirefr...</td></tr></table></section>
        </div>
        <div class="strip">
          <button aria-label="Close"><svg viewBox="0 0 10 10"><path d="M1 2l8 7M9 2L1 9" stroke="#c8c8c8" stroke-width="2"/></svg></button>
          <button aria-label="Auto-hide"><svg viewBox="0 0 10 10"><path d="M1 0v10M9 2v7L6 5z" stroke="#bbb" fill="#bbb"/><path d="M2 2l3 3-3 3z" fill="#bbb"/></svg></button>
          <button aria-label="Settings"><svg viewBox="0 0 16 16"><use href="#gear"/></svg></button>
          <h3>PROPERTIES</h3>
          <svg class="pi" viewBox="0 0 12 13"><path d="M.500.500h11v12H.500zM5.500 3.500h-2v4h3v-4zM8.500 2.500v6M3 10.500h6M5 9v3" fill="none" stroke="#ccc"/></svg>
        </div>
      </section>
    </main>
    <section class="cmd">
      <div class="grip">
        <svg viewBox="0 0 22 50"><path d="M3 5.500h17M3 8.500h17" stroke="#bbb" stroke-width="2" stroke-dasharray="2 1"/><path d="M6 17l8 8M14 17l-8 8" stroke="#f2f2f2" stroke-width="2"/><path d="M8 39l9 10" stroke="#f2f2f2" stroke-width="3"/><path d="M4 38q3 4 6 1t0-5M4 38l3 0 2-4" fill="none" stroke="#f2f2f2" stroke-width="2"/></svg>
      </div>
      <div class="lines">
        <p>Command: *Cancel*</p>
        <label><svg viewBox="0 0 16 14"><rect x=".5" y=".5" width="15" height="13" fill="#dfe2e8" stroke="#999"/><path d="M3 4l3 3-3 3M8 10h5" fill="none" stroke="#223" stroke-width="1.500"/></svg><i class="arrow grey"></i><input type="text" aria-label="Command" placeholder="Type a command"></label>
      </div>
    </section>
  </div>
</div>

<footer class="bottom">
  <nav class="layouts"><a href="#" class="on">Model</a><a href="#">Layout1</a><a href="#">Layout2</a><button aria-label="New layout">+</button></nav>
  <div class="status">
    <div class="cell coords">-689.9473, -6.5042, 0.0000</div>
    <button class="cell model">MODEL</button>
    <div class="cell c66"><svg viewBox="0 0 64 24"><path d="M5 8.500h14M5 12.500h14M5 16.500h14M6.500 5v14M9.500 5v14M12.500 5v14M15.500 5v14M18.500 5v14" stroke="#bdbdbd"/><path d="M29 6.500h14M29 9.500h14M29 12.500h14M29 15.500h14M29 18.500h14" stroke="#bdbdbd" stroke-dasharray="1 2"/><path d="M52 10h7l-3 4z" fill="#fff"/></svg></div>
    <div class="cell c26"><svg viewBox="0 0 24 24"><path d="M4 9.500h7M7.500 6v7" stroke="#ccc"/><rect x="10" y="14" width="10" height="4" rx="1" fill="#ccc"/></svg></div>
    <div class="cell c103"><svg viewBox="0 0 100 24"><path d="M5.500 6v12.500H18M5 13.500h5v5" fill="none" stroke="#bdbdbd" stroke-width="1.500"/><circle cx="35" cy="12" r="6" fill="none" stroke="#aaa" stroke-width="1.500"/><path d="M35 12h8M35 12l6-6" stroke="#aaa" stroke-width="1.500"/><path d="M51 10h7l-3 4zM90 10h7l-3 4z" fill="#fff"/><path d="M66 4l17 16M74.500 3v18" stroke="#aaa" stroke-width="1.500"/></svg></div>
    <div class="cell c65"><svg viewBox="0 0 62 24"><path d="M3 18.500h17M4 18L16 6" stroke="#1d8cff" stroke-width="2"/><circle cx="10" cy="12" r="2" fill="#1d8cff"/><path d="M31 7h13v11H31z" fill="none" stroke="#ccc"/><path d="M28 5h4v4h-4z" fill="#0c0" stroke="#000"/><path d="M53 10h7l-3 4z" fill="#fff"/></svg></div>
    <div class="cell scale">
      <svg class="i16 blue"><use href="#anno-vis"/></svg><svg class="i16 blue"><use href="#anno-auto"/></svg><svg class="i16"><use href="#anno"/></svg>
      <span>1/32" = 1'-0"</span><i class="arrow big"></i>
    </div>
    <div class="cell c42"><svg class="g" viewBox="0 0 16 16"><use href="#gear"/></svg><i class="arrow big"></i></div>
    <div class="cell c26"><svg viewBox="0 0 24 24"><path d="M12 5v14M5 12h14" stroke="#ccc" stroke-width="1.500"/></svg></div>
    <div class="cell c26"><svg viewBox="0 0 24 24"><path d="M4 5h6v6H4zM11 12l3 6H8z" fill="none" stroke="#bbb"/><circle cx="16" cy="11" r="3" fill="none" stroke="#bbb"/></svg></div>
    <div class="cell c26"><svg viewBox="0 0 24 24"><circle cx="12" cy="12" r="8" fill="#0b4c94" stroke="#1d8cff" stroke-width="1.500"/><path d="M10 15l6-5" stroke="#1d8cff" stroke-width="1.500"/></svg></div>
    <div class="cell c62"><svg viewBox="0 0 60 24"><path d="M3 4h14v15H3z" fill="#3a78c8"/><path d="M3 9h14M3 14h14" stroke="#9cc4ff"/><path d="M6 13l3 4 8-10" fill="none" stroke="#a9f08e" stroke-width="3"/><path d="M24 5h8l3 4v8H24z" fill="#dce6f5" stroke="#345"/><path d="M23 11h8v8h-8z" fill="#f3c93c"/><path d="M30 15l3 4 5-6" fill="none" stroke="#5bc236" stroke-width="2.500"/><path d="M45 6h8v6h-8zM43 11h12v6H43z" fill="#ddd" stroke="#333"/><path d="M45 18h9" stroke="#e07a2a" stroke-width="2"/></svg></div>
    <div class="cell c26"><svg viewBox="0 0 24 24"><path d="M4 7h16v10H4z" fill="none" stroke="#ccc" stroke-width="1.500"/><path d="M7 15l4-3M7 12v3h3M17 9l-4 3M14 9h3v3" stroke="#ccc" fill="none"/></svg></div>
    <div class="cell c26"><svg viewBox="0 0 24 24"><path d="M5 7h14M5 12h14M5 17h14" stroke="#ccc" stroke-width="1.500"/></svg></div>
  </div>
</footer>
<div class="edge"></div>

<div class="balloon" role="status">
  <svg viewBox="0 0 248 102"><path d="M16 1.500H232Q247 3 247 16V66Q247 80 232 80.500H190.500V99L172 80.500H16Q1 79 1 66V16Q1 3 16 1.500z" fill="#ffffe1" stroke="#000" stroke-width="1.500"/></svg>
  <div class="msg">
    <div class="head"><svg viewBox="0 0 16 16"><circle cx="8" cy="8" r="7.500" fill="#2a56b8"/><path d="M4 4q4-3 8 0" stroke="#a9c0f0" stroke-width="2" fill="none"/><path d="M8 3v2M8 6v7" stroke="#fff" stroke-width="2"/></svg><b>Plot and Publish Job Complete</b><button aria-label="Close"><svg viewBox="0 0 16 16"><path d="M4 4l8 8M12 4l-8 8" stroke="#000" stroke-width="2"/></svg></button></div>
    <p>No errors or warnings found</p>
    <a href="#">Click to view plot and publish details...</a>
  </div>
</div>
<svg class="scribble" viewBox="0 0 225 90"><path d="M210 11C200 13 190 13 187 12C180 11 174 9 167 9C155 9 145 10 137 12L100 19Q85 22 77 21L47 18L27 18Q22 19 23 25L25 37Q29 45 27 53L24 71Q25 79 33 81Q45 87 63 87C80 86 95 81 117 81L157 81C170 80 178 78 187 76C195 73 207 71 213 66Q211 55 209 48Q207 40 208 34Q206 22 207 12" fill="none" stroke="#fe0000" stroke-width="7" stroke-linejoin="round" stroke-linecap="round"/></svg>
</body>
</html>
```
FILE: styles.css
```css
* { box-sizing: border-box; }
body { margin: 0; height: 100vh; padding-bottom: 26px; display: flex; flex-direction: column; position: relative; overflow: hidden; background: #fff; font: 12px/16px "Open Sans", "Noto Sans", sans-serif; color: #fff; }
button, input, select { font: inherit; color: inherit; background: none; border: 0; margin: 0; padding: 0; outline: 0; }
select { appearance: none; }
a { color: inherit; text-decoration: none; }
h1, h2, h3, p { margin: 0; font: inherit; }
svg { display: block; flex: none; }
.defs { position: absolute; width: 0; height: 0; }
.i16 { width: 16px; height: 16px; }
.arrow { display: inline-block; flex: none; width: 5px; height: 3px; background: #fff; clip-path: polygon(0 0, 100% 0, 50% 100%); }
.arrow.big { width: 7px; height: 4px; }
.arrow.dim { background: #c4c4c4; }
.arrow.grey { background: #888; width: 6px; }
.arrow.right { width: 4px; height: 8px; clip-path: polygon(0 0, 100% 50%, 0 100%); }

.top { position: relative; flex: none; font-size: 11px; }
.titlebar { display: flex; height: 24px; color: #000; }
.quick { display: flex; align-items: center; flex: none; width: 459px; padding-left: 49px; background: linear-gradient(#979797, #6f6f6f); border-right: 1px solid #666; }
.qb { width: 24px; height: 16px; flex: none; }
.qb svg { width: 16px; height: 16px; }
.quick .arrow.dim { margin-right: 7px; margin-left: -1px; }
.workspace-pick { display: flex; align-items: center; width: 180px; height: 22px; padding: 0 4px 0 3px; gap: 2px; margin-left: auto; flex: none; background: linear-gradient(#4e4e4e, #666); border: 1px solid #333; color: #eee; font-size: 12px; }
.workspace-pick select { flex: 1; min-width: 0; color: #fff; }
.more { width: 15px; flex: none; }
.titlebar h1 { flex: 1; display: flex; gap: 12px; justify-content: center; padding-top: 4px; font-size: 12px; }
.info { display: flex; align-items: center; width: 446px; padding-left: 5px; background: linear-gradient(#979797, #6f6f6f); color: #fff; border: 1px solid #666; }
.info input { width: 180px; height: 22px; margin: 0 4px 0 3px; padding-left: 3px; background: #747474; border: 1px solid #3a3a3a; font-style: italic; }
::placeholder { color: #c2c2c2; opacity: 1; }
.sign { display: flex; align-items: center; gap: 4px; width: 123px; text-align: left; }
.sign .arrow { margin-left: auto; margin-right: 14px; }
.qb.app { width: 22px; }
.qb.help { width: 24px; margin-left: 18px; }
.winctl { display: flex; width: 163px; padding-left: 41px; gap: 33px; align-items: center; }
.winctl button, .winctl svg { width: 12px; height: 12px; }

.menubar { display: flex; height: 22px; padding-left: 43px; border-top: 1px solid #333; border-bottom: 1px solid #2e2e2e; background: linear-gradient(#a2a2a2, #545454); }
.menubar a { padding: 2px 13px 0 12px; color: #f6f6f6; }
.docctl { margin-left: auto; padding: 4px 4px 0 0; }
.docctl svg { width: 44px; height: 12px; }
.appbtn { position: absolute; left: 0; top: 0; width: 41px; height: 41px; border: 1px solid #111; background: linear-gradient(#bdbdbd, #707070); }
.appbtn svg { width: 39px; height: 39px; }
.appbtn b { position: absolute; left: 17px; bottom: 0; font-size: 8px; line-height: 10px; color: #000; }
.rtabs { display: flex; height: 20px; padding-left: 4px; background: #535353; }
.rtabs a { padding: 1px 9px 0; margin-right: 1px; border: 1px solid transparent; border-bottom: 0; color: #cfcfcf; line-height: 16px; }
.rtabs a.on { background: linear-gradient(#757575, #5c5c5c); border-color: #2f2f2f; color: #fff; }
.rtabs a.hl { border-color: #777; background: #5e5e5e; color: #fff; }
.mini { margin-left: 23px; }
.mini svg { width: 24px; height: 8px; }

.ribbon { display: flex; height: 99px; padding-left: 2px; border-top: 1px solid #2f2f2f; border-bottom: 2px solid #777; background: linear-gradient(#535353, #383838); }
.panel { display: flex; flex-direction: column; flex: none; border-right: 1px solid #3a3a3a; background: #5c5c5c; }
.panel h2 { display: flex; align-items: center; justify-content: center; gap: 5px; position: relative; height: 18px; background: linear-gradient(#474747, #4e4e4e); box-shadow: inset 1px 0 #606060; font-size: 12px; }
.tools { flex: 1; display: grid; align-items: start; }
.p-block { width: 112px; } .p-block .tools { grid-template-columns: 42px 66px; }
.p-def { width: 215px; } .p-def .tools { grid-template-columns: 60px 56px 58px 38px; }
.p-ref { width: 282px; } .p-ref .tools { grid-template-columns: 43px 39px 39px 1fr; }
.p-cloud { width: 102px; } .p-cloud .tools { grid-template-columns: 60px 38px; }
.p-import { width: 63px; }
.p-data { width: 145px; } .p-data .tools { grid-template-columns: 42px 1fr; }
.p-linking { width: 196px; } .p-linking .tools { grid-template-columns: 42px 1fr; }
.p-content { width: 267px; } .p-content .tools { grid-template-columns: 45px 1fr; }
.p-loc { width: 69px; }
.p-touch { width: 44px; border: 0; }
.p-touch h2 { border-bottom: 2px solid #2b5f86; background: #3e3e3e; }
.tool { display: flex; flex-direction: column; align-items: center; position: relative; padding-top: 6px; line-height: 15px; white-space: nowrap; text-align: center; }
.tool > svg { width: 32px; height: 32px; margin-bottom: 4px; }
.tool span { display: flex; justify-content: center; }
.tool .side { position: absolute; right: 2px; top: 55px; }
.tool .under { margin-top: 2px; }
.tool em { position: absolute; top: 24px; left: 23px; font: 10px/13px "Open Sans", sans-serif; }
.smalls { padding: 3px 0 0 4px; }
.smalls button { display: flex; align-items: center; gap: 5px; height: 24px; white-space: nowrap; }
.smalls svg { width: 16px; height: 16px; }
.launch { position: absolute; right: 5px; bottom: 5px; width: 6px; height: 6px; }
.seek { padding-top: 5px; white-space: nowrap; }
.seek label { display: flex; align-items: center; width: 200px; height: 21px; padding: 0 2px 0 3px; margin-bottom: 2px; background: #747474; border: 1px solid #333; }
.seek input { flex: 1; min-width: 0; font-style: italic; }
.seek svg { width: 16px; height: 16px; }

.filetabs { flex: none; display: flex; align-items: flex-end; height: 29px; padding-left: 20px; background: #363636; border-bottom: 4px solid #5a5a5a; font-size: 11px; }
.ftab { display: flex; width: 124px; height: 22px; padding: 3px 12px 0; background: #555; color: #b8b8b8; border-radius: 8px 8px 0 0; clip-path: polygon(0 100%, 6px 0, 118px 0, 100% 100%); }
.ftab.on { background: linear-gradient(#7e7e7e, #5a5a5a); color: #fff; }
.ftab span { margin-left: auto; color: #3a3a3a; }
.plus { width: 22px; height: 16px; margin: 0 0 4px 7px; background: #565656; border-radius: 4px 8px 4px 8px; color: #ccc; font: bold 16px/16px "Open Sans", sans-serif; }

.work { flex: 1; display: flex; min-height: 0; }
.pm { width: 25px; padding: 4px 2px 5px 1px; background: #5a5a5a; font-size: 11px; }
.pm div { height: 100%; display: flex; align-items: center; justify-content: center; border: 1px solid #3a3a3a; background: linear-gradient(90deg, #8c8c8c, #686868); }
.pm span { writing-mode: vertical-rl; transform: rotate(180deg); white-space: nowrap; }
.center { flex: 1; display: flex; flex-direction: column; min-width: 0; }
.canvas { flex: 1; position: relative; min-height: 0; overflow: hidden; background: #fff; color: #000; }
.drawing { width: 100%; height: 100%; }
.plan path { fill: none; stroke: #929292; stroke-width: 4; }
.plan g[filter] path { fill: #888; stroke: none; }
.plan path.thick { stroke-width: 9; }
.plan path.black { fill: #000; stroke: none; }
.plan path.dim { stroke: #000; stroke-width: 4; }
.plan path.hatch { stroke: #666; stroke-width: 3; }
.plan .win path { stroke: #a0a0a0; stroke-width: 8; }
.lbl text { font: 25px "DejaVu Sans", sans-serif; fill: #808080; stroke: #808080; stroke-width: 1px; }
.lbl text.sm { font-size: 21px; }
.lbl text.lg { font-size: 29px; }
.dimtext { font: 33px "Liberation Sans", sans-serif; }
.axis { font: 19px "Open Sans", sans-serif; font-weight: 300; }
.viewlabel { position: absolute; left: 3px; top: 6px; }

.cube { position: absolute; right: 0; top: 13px; width: 144px; height: 180px; color: #c4c4c4; }
.cube > svg { width: 140px; height: 140px; }
.cube b { position: absolute; font: bold 20px/22px "Liberation Sans", sans-serif; color: #ddd; -webkit-text-stroke: 1px #b5b5b5; }
.cube .n { left: 54px; top: 2px; } .cube .e { left: 111px; top: 58px; } .cube .s { left: 54px; top: 115px; }
.face { position: absolute; left: 35px; top: 43px; width: 52px; height: 52px; padding: 9px; background: #f0f0f0; border: 1px solid #a8a8a8; }
.face span { display: block; background: #e2e4e8; font: bold 12px/32px "Liberation Sans", sans-serif; color: #999; }
.wcs { position: absolute; left: 37px; top: 156px; width: 48px; height: 18px; display: flex; align-items: center; justify-content: center; gap: 4px; background: #ececf5; border-radius: 4px; color: #999; font-size: 11px; }
.wcs svg { width: 10px; height: 6px; }

.palette { position: absolute; right: 113px; top: 39px; width: 277px; height: 706px; display: flex; background: #535353; border: 1px solid #2e2e2e; border-radius: 3px; color: #fff; padding: 2px 0 2px 2px; }
.palette .body { width: 252px; padding: 12px 20px 0 13px; background: #5c5c5c; border: 1px solid #333; border-radius: 4px; }
.pick { display: flex; align-items: center; margin: 0 -16px 4px -6px; }
.pick label { display: flex; flex: none; width: 158px; height: 23px; margin-right: 7px; border: 1px solid #3c3c3c; background: linear-gradient(#777, #606060); }
.pick select { flex: 1; padding-left: 3px; }
.pick span { width: 14px; display: flex; align-items: center; justify-content: center; border-left: 1px solid #3c3c3c; }
.pick button { flex: none; width: 25px; }
.pick button svg { width: 16px; height: 16px; }
.grp { margin-bottom: 2px; }
.grp > button { display: flex; align-items: center; justify-content: space-between; width: 100%; height: 20px; padding: 0 6px; background: #474747; border: 1px solid #303030; font-weight: 700; }
.grp > button i { width: 7px; height: 2px; background: #fff; }
.grp table { width: 201px; margin-left: auto; border-collapse: collapse; table-layout: fixed; }
.grp tr { height: 19px; }
.grp th, .grp td { padding: 0 0 0 6px; border: 1px solid #505050; border-top: 0; font-weight: 400; text-align: left; line-height: 18px; white-space: nowrap; }
.grp th { width: 129px; }
.grp td { padding-left: 2px; color: #eee; }
.grp td.off { color: #a8a8a8; }
.swatch { display: inline-block; width: 10px; height: 10px; margin: 0 6px 0 1px; background: #000; border-radius: 2px; }
.line { display: inline-block; width: 27px; height: 1px; margin: 0 5px 4px 2px; background: #fff; }
.strip { flex: 1; display: flex; flex-direction: column; align-items: center; gap: 9px; padding: 3px 2px 0 0; }
.strip button, .strip button svg { width: 10px; height: 10px; color: #bbb; }
.strip h3 { margin-top: auto; writing-mode: vertical-rl; transform: rotate(180deg); color: #bbb; font-size: 12px; line-height: 14px; }
.strip .pi { width: 12px; height: 13px; margin-bottom: 3px; }

.cmd { flex: none; display: flex; height: 55px; border-top: 3px solid #5a5a5a; border-bottom: 1px solid #777; }
.grip { width: 23px; background: linear-gradient(#7c7c7c, #444); }
.grip svg { width: 22px; height: 50px; }
.lines { flex: 1; font: 12px/16px "DejaVu Sans Mono", monospace; color: #000; }
.lines p { height: 29px; padding: 11px 2px 0; background: #c8c8c8; border-bottom: 1px solid #777; }
.lines label { display: flex; align-items: center; gap: 4px; height: 22px; padding-left: 5px; background: #fff; }
.lines label svg { width: 15px; height: 14px; }
.lines input { flex: 1; margin-left: 3px; font-style: italic; }
.lines ::placeholder { color: #999; }

.bottom { flex: none; display: flex; justify-content: space-between; height: 28px; background: #363636; }
.layouts { display: flex; padding-left: 10px; height: 18px; font-size: 11px; }
.layouts a { width: 65px; text-align: center; color: #bbb; background: #525252; clip-path: polygon(0 0, 100% 0, 59px 100%, 6px 100%); }
.layouts a.on { width: 61px; background: linear-gradient(#5a5a5a, #7d7d7d); color: #fff; font-weight: 700; }
.layouts button { width: 22px; height: 16px; margin-left: 2px; background: #505050; border-radius: 8px 4px 8px 4px; color: #bbb; font: bold 15px/14px "Open Sans", sans-serif; }
.status { display: flex; gap: 1px; padding: 0 1px 0 0; background: #474747; }
.cell { display: flex; align-items: center; justify-content: center; flex: none; height: 26px; border: 1px solid #7b7b7b; background: #535353; }
.coords { width: 182px; justify-content: flex-end; padding-right: 5px; }
.model { width: 49px; }
.c66 { width: 66px; } .c66 svg { width: 64px; height: 24px; }
.c26 { width: 25px; } .c26 svg { width: 24px; height: 24px; }
.c103 { width: 102px; } .c103 svg { width: 100px; height: 24px; }
.c65 { width: 64px; } .c65 svg { width: 62px; height: 24px; }
.scale { width: 161px; gap: 8px; color: #bdbdbd; }
.scale span { color: #fff; }
.scale .blue { color: #1d8cff; filter: drop-shadow(0 0 2px #1668c8); }
.scale .arrow { margin-left: -2px; }
.c42 { width: 42px; gap: 12px; padding-left: 2px; color: #aaa; } .g { width: 11px; height: 11px; }
.c62 { width: 62px; } .c62 svg { width: 60px; height: 24px; }
.edge { flex: none; height: 2px; background: linear-gradient(90deg, #111 48px, #ccc 48px, #ccc 392px, #111 392px); }

.balloon { position: absolute; right: 6px; bottom: 41px; width: 248px; height: 102px; color: #000; }
.balloon > svg { position: absolute; width: 248px; height: 102px; }
.msg { position: relative; padding: 10px 10px 0 11px; }
.head { display: flex; align-items: center; margin-bottom: 5px; }
.head svg { width: 16px; height: 16px; }
.head b { margin-left: 10px; white-space: nowrap; font-size: 11px; }
.head button { margin-left: auto; border: 1px solid #888; background: #f4f4ee; }
.head button svg { width: 14px; height: 14px; }
.msg p, .msg a { display: block; margin-left: 5px; white-space: nowrap; }
.msg a { margin-top: 5px; color: #00f; text-decoration: underline; }
.scribble { position: absolute; right: 215px; bottom: 0; width: 225px; height: 90px; }
```
